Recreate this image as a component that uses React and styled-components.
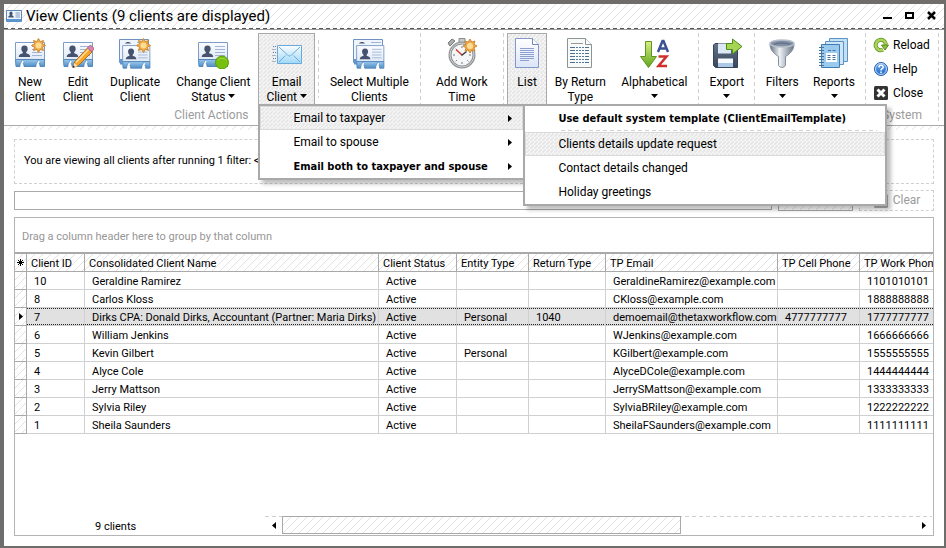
import React from 'react';
import styled, { createGlobalStyle, css } from 'styled-components';

const LINE = '#a9a9a9';
const SOFT = '#d0d0d0';

const wideHatch = css`
  background-image: linear-gradient(135deg, transparent 44%, #e2e2e2 46%, #e2e2e2 54%, transparent 56%);
  background-size: 8px 8px;
`;
const denseHatch = css`
  background-color: #f8f8f8;
  background-image: linear-gradient(135deg, #f8f8f8 20%, #e6e6e6 44%, #e6e6e6 56%, #f8f8f8 80%);
  background-size: 4px 4px;
`;
const dashH = (color) => css`
  background-image: repeating-linear-gradient(90deg, ${color} 0 4px, transparent 4px 7px);
`;
const dashV = css`
  background-image: repeating-linear-gradient(180deg, #d0d0d0 0 4px, transparent 4px 7px);
`;

const GlobalStyle = createGlobalStyle`
  * { box-sizing: border-box; }
  body { margin: 0; background: #fff; overflow: hidden; }
  button, input { font: inherit; color: inherit; margin: 0; }
`;

const Window = styled.div`
  display: flex;
  flex-direction: column;
  height: 100vh;
  min-height: 440px;
  border: solid #6f6d6c;
  border-width: 4px 2px 2px 4px;
  background: #fff;
  color: #000;
  font: 12px/15px Roboto, 'Open Sans', sans-serif;
`;

const TitleBar = styled.header`
  display: flex;
  align-items: center;
  flex: none;
  height: 24px;
  padding: 0 7px 0 2px;
  gap: 4px;
  ${wideHatch}
`;

const TitleRule = styled.div`
  flex: none;
  height: 2px;
  ${dashH('#555')}
  background-size: 100% 1px;
  background-repeat: no-repeat;
  border-bottom: 1px solid #9a9a9a;
`;

const Title = styled.h1`
  flex: 1;
  margin: 0;
  font-size: 15px;
  line-height: 22px;
  font-weight: 400;
`;

const PlainButton = styled.button`
  display: flex;
  align-items: center;
  padding: 0;
  border: 0;
  background: none;
`;

const WindowButtons = styled.div`
  display: flex;
  gap: 10px;
`;

const Ribbon = styled.nav`
  display: flex;
  flex: none;
  height: 96px;
  padding: 3px 2px 0;
  border-bottom: 1px solid ${LINE};
  background: #fff;
`;

const Group = styled.section`
  display: flex;
  flex-direction: column;
`;

const GroupItems = styled.div`
  display: flex;
  height: 72px;
`;

const GroupLabel = styled.div`
  margin-top: 3px;
  text-align: center;
  color: #9b9b9b;
`;

const Separator = styled.div`
  flex: none;
  width: 1px;
  margin: ${(p) => (p.$inner ? '7px 3px' : '0 3px 2px')};
  ${dashV}
`;

const BigButton = styled.button`
  display: flex;
  flex-direction: column;
  align-items: center;
  height: 72px;
  min-width: ${(p) => p.$min || 0}px;
  padding: 3px ${(p) => (p.$tight ? 4 : 7)}px 0;
  border: 1px solid transparent;
  background: none;
  text-align: center;
  white-space: nowrap;
  svg { flex: none; }
  ${(p) => p.$active && css`
    ${denseHatch}
    border-color: ${LINE};
  `}
`;

const ButtonText = styled.span`
  display: flex;
  flex-direction: column;
  align-items: center;
  margin-top: 6px;
`;

const TextLine = styled.span`
  display: flex;
  align-items: center;
  gap: 3px;
  height: 15px;
  svg { margin-bottom: 3px; }
`;

const MenuAnchor = styled.div`
  position: relative;
`;

const Menu = styled.ul`
  position: absolute;
  z-index: 5;
  top: 71px;
  left: 0;
  width: 267px;
  margin: 0;
  padding: 0;
  list-style: none;
  border: 2px solid ${LINE};
  background: #fff;
  box-shadow: 4px 4px 4px rgba(0, 0, 0, 0.25);
`;

const SubMenu = styled(Menu)`
  top: -3px;
  left: 262px;
  width: 364px;
`;

const MenuItem = styled.li`
  position: relative;
  border: 1px solid transparent;
  ${(p) => p.$active && css`
    ${denseHatch}
    border-color: #dadada;
  `}
`;

const MenuButton = styled.button`
  display: flex;
  align-items: center;
  justify-content: space-between;
  width: 100%;
  height: 22px;
  padding: 0 10px 0 32px;
  border: 0;
  background: none;
  white-space: nowrap;
  ${(p) => p.$bold && css`
    font: bold 11px/15px 'DejaVu Sans Condensed', 'DejaVu Sans', sans-serif;
  `}
`;

const MenuRule = styled.li`
  height: 1px;
  margin: 0 8px 1px 36px;
  ${dashH(SOFT)}
`;

const SystemList = styled.div`
  display: flex;
  flex-direction: column;
  height: 72px;
  width: 62px;
  margin-left: 4px;
`;

const SmallButton = styled.button`
  display: flex;
  align-items: center;
  gap: 4px;
  height: 24px;
  padding: 0;
  border: 0;
  background: none;
`;

const Strip = styled.div`
  flex: none;
  height: 4px;
  ${wideHatch}
`;

const Content = styled.main`
  display: flex;
  flex-direction: column;
  flex: 1;
  min-height: 0;
  gap: 6px;
  padding: 9px 10px 10px;
  font-size: 11px;
`;

const FilterBox = styled.div`
  display: flex;
  align-items: center;
  flex: none;
  height: 45px;
  padding: 0 9px 2px;
  border: 1px dashed ${SOFT};
`;

const SearchRow = styled.div`
  display: flex;
  align-items: center;
  flex: none;
  gap: 6px;
  height: 21px;
`;

const SearchInput = styled.input`
  flex: 1;
  min-width: 0;
  height: 19px;
  padding: 0 4px;
  border: 1px solid ${LINE};
  border-radius: 0;
  outline: 0;
`;

const SearchButton = styled.button`
  display: flex;
  align-items: center;
  justify-content: center;
  gap: 4px;
  width: 75px;
  height: 21px;
  padding: 0;
  border: 1px solid ${LINE};
  background-color: #fff;
  ${wideHatch}
  ${(p) => p.$muted && css`
    border: 1px dashed ${SOFT};
    background: #fff;
    color: #9b9b9b;
    font-size: 12px;
  `}
`;

const Grid = styled.section`
  display: flex;
  flex-direction: column;
  flex: 1;
  min-height: 0;
  border: 1px solid #b4b4b4;
`;

const GroupPanel = styled.div`
  display: flex;
  align-items: center;
  flex: none;
  height: 34px;
  padding: 2px 7px 0;
  color: #969696;
`;

const TableArea = styled.div`
  flex: 1;
  min-height: 0;
  overflow: hidden;
  border-top: 2px solid ${LINE};
`;

const Table = styled.table`
  width: 100%;
  min-width: 940px;
  table-layout: fixed;
  border-collapse: separate;
  border-spacing: 0;
`;

const Col = styled.col`
  width: ${(p) => (p.$w ? `${p.$w}px` : 'auto')};
`;

const HeadCell = styled.th`
  height: 18px;
  padding: 2px 0 0 4px;
  border: solid ${LINE};
  border-width: 0 1px 1px 0;
  font-weight: 400;
  line-height: 15px;
  text-align: left;
  white-space: nowrap;
  ${wideHatch}
`;

const MarkCell = styled.th`
  height: 18px;
  padding: 0;
  border: solid ${LINE};
  border-width: 0 1px 1px 0;
  line-height: 0;
  ${wideHatch}
`;

const Cell = styled.td`
  height: 18px;
  padding: 2px 0 0 7px;
  border: solid ${SOFT};
  border-width: 0 1px 1px 0;
  line-height: 15px;
  white-space: nowrap;
`;

const Row = styled.tr`
  ${(p) => p.$selected && css`
    ${Cell} {
      background-color: #e1e1e1;
      background-image:
        repeating-linear-gradient(90deg, #222 0 1px, transparent 1px 2px),
        repeating-linear-gradient(90deg, #222 0 1px, transparent 1px 2px);
      background-size: 100% 1px;
      background-position: top, bottom;
      background-repeat: no-repeat;
    }
  `}
`;

const GridFooter = styled.footer`
  display: flex;
  flex: none;
  height: 19px;
`;

const Total = styled.div`
  width: 250px;
  padding-left: 80px;
  line-height: 22px;
`;

const ScrollBar = styled.div`
  display: flex;
  flex: 1;
  align-items: flex-start;
  margin-right: 1px;
  ${dashH(SOFT)}
  background-size: 100% 1px;
  background-repeat: no-repeat;
`;

const ScrollArrow = styled(PlainButton)`
  justify-content: center;
  width: 17px;
  height: 19px;
`;

const ScrollTrack = styled.div`
  flex: 1;
`;

const ScrollThumb = styled.div`
  width: 63%;
  height: 18px;
  border: 1px solid ${LINE};
  background-color: #fff;
  ${wideHatch}
`;

const Grad = ({ id, a, b }) => (
  <linearGradient id={id} x1="0" y1="0" x2="0" y2="1">
    <stop offset="0" stopColor={a} />
    <stop offset="1" stopColor={b} />
  </linearGradient>
);

const Card = ({ name }) => (
  <g>
    <Grad id={`${name}-p`} a="#fbfdff" b="#dfe9f5" />
    <Grad id={`${name}-b`} a="#9ac7ec" b="#4f90c8" />
    <path d="M1.500 5.500h29v17h-29z" fill={`url(#${name}-p)`} stroke="#7f9cc8" />
    <path d="M1.500 22.500h29v7h-4.500v-1.500a2 2 0 0 0-1.500-2v-2h-1v2a2 2 0 0 0-1.500 2v1.500h-12v-1.500a2 2 0 0 0-1.500-2v-2h-1v2a2 2 0 0 0-1.500 2v1.500h-4z" fill={`url(#${name}-b)`} stroke="#5587ba" />
    <path d="M7.500 29.500v-2.500a1.800 1.800 0 0 1 1-1.500v-1.500M23.500 29.500v-2.500a1.800 1.800 0 0 1 1-1.500v-1.500" fill="none" stroke="#fff" strokeWidth="1.500" />
    <path d="M10.500 8.500c2.400 0 3.300 1.600 3.200 3.600-.1 1.500-.8 2.500-1.500 3.200v1c1.800.6 3.800 1 4 3.700h-11.400c.2-2.700 2.200-3.100 4-3.700v-1c-.7-.7-1.400-1.700-1.500-3.200-.1-2 .8-3.600 3.200-3.600z" fill="#46536f" />
    <path d="M18 9.500h10M18 12.500h10M18 15.500h10M18 18.500h10" stroke="#a3b5d6" />
  </g>
);

const Burst = ({ x = 25, y = 9 }) => (
  <g transform={`translate(${x} ${y})`}>
    <path d="M0-7 1.800-3.900 5-5 3.900-1.800 7 0 3.900 1.800 5 5 1.800 3.900 0 7-1.800 3.900-5 5-3.900 1.800-7 0-3.900-1.800-5-5-1.800-3.900z" fill="#f0ab48" stroke="#cc8a35" strokeLinejoin="round" />
    <circle r="3" fill="#ffdc94" />
  </g>
);

const Big = ({ children }) => <svg width="32" height="32" viewBox="0 0 32 32" aria-hidden="true">{children}</svg>;

const BackCard = () => (
  <g>
    <path d="M.5 2.500h29v23h-29z" fill="#eef4fb" stroke="#6f92c3" />
    <path d="M1 22h4v5.500H1z" fill="#5d99cf" />
    <path d="M6 6.500c1-2 5-2 6 0z" fill="#46536f" />
    <path d="M18 5.500h10" stroke="#a3b5d6" />
  </g>
);

const NewIcon = () => <Big><Card name="new" /><Burst x={24.500} y={8.500} /></Big>;
const EditIcon = () => (
  <Big>
    <Card name="edit" />
    <path d="m11 30.500 1.500-5.500 13-14 4.500 4-13.500 13.500z" fill="#f5a42c" stroke="#b66b16" />
    <path d="m14 25.500 13-13.500" stroke="#ffe09a" strokeWidth="1.500" />
    <path d="m25.500 11 2-2.300c1.400-1 4.900 2 4 3.800l-1.700 2.300z" fill="#d987b2" stroke="#a9628b" />
    <path d="m11 30.500 1.300-4.500 3.500 3z" fill="#f7dfb8" /><path d="m10.500 31 .8-2.500 1.700 1.500z" fill="#333" />
  </Big>
);
const StackIcon = ({ name, burst }) => (
  <Big><BackCard /><g transform="translate(2.200 3.400) scale(.94)"><Card name={name} /></g>{burst && <Burst x={24.500} y={8.500} />}</Big>
);
const StatusIcon = () => <Big><Card name="status" /><circle cx="25" cy="25.500" r="6.500" fill="#77c00e" stroke="#5b9a0a" /><path d="M20.500 23.500a5 4 0 0 1 9 0" stroke="#9cda45" fill="none" /></Big>;
const MailIcon = () => (
  <Big>
    <Grad id="mail" a="#fafdff" b="#a0d8f8" />
    <path d="M6.500 8.500h24v18h-24z" fill="url(#mail)" stroke="#6aa9dc" />
    <path d="m8 10 8.500 8c1.300 1.200 2.700 1.200 4 0l8.500-8M8 25l6.500-6.500M29 25l-6.500-6.500" fill="none" stroke="#6aabdc" />
    <path d="M2 9.500h3M1.500 12.500h3.500M2 15.500h3M1.500 18.500h3.500M2 21.500h3M1.500 24.500h3.500" stroke="#5f7aa3" strokeDasharray="1 1" />
  </Big>
);
const ClockIcon = () => (
  <Big>
    <path d="m2 6 4-4 3 2-5 5z" fill="#a9adb0" stroke="#777" />
    <path d="M13 1.500h6v4h-6z" fill="#c8cacc" stroke="#8a8a8a" />
    <circle cx="16" cy="18" r="12" fill="#f5f6f7" stroke="#8e9194" strokeWidth="3" />
    <circle cx="16" cy="18" r="12" fill="none" stroke="#cfd1d3" />
    <path d="M16 9v2M16 25v2M7 18h2M23 18h2M9.700 11.700l1.200 1.200M21.300 23.300l1.200 1.200M9.700 24.300l1.200-1.200" stroke="#777" />
    <path d="m16 18-6-5.500" stroke="#d83a2c" strokeWidth="1.500" /><path d="m15.500 18.500 5-4" stroke="#333" strokeWidth="1.500" />
    <Burst x={24} y={9} />
  </Big>
);
const ListIcon = () => (
  <Big>
    <Grad id="list" a="#fff" b="#dbe5f8" />
    <path d="M4.500 1.500h17l6 6v23h-23z" fill="url(#list)" stroke="#8499c9" />
    <path d="M21.500 1.500v6h6" fill="#fff" stroke="#6f88bf" />
    <path d="M9 11.500h14M9 13.500h14M9 15.500h14M9 17.500h14M9 19.500h14M9 21.500h14M9 23.500h9" stroke="#8d9fd0" />
  </Big>
);
const TypeIcon = () => (
  <Big>
    <path d="M3.500 1.500h18l6 6v23h-24z" fill="#f9fafa" stroke="#8d9496" />
    <path d="M21.500 1.500v6h6" fill="#fff" stroke="#8d9496" />
    <path d="M7 6.500h12" stroke="#999" />
    <path d="M6 10.500h5M6 13.500h5M6 16.500h5M6 19.500h5M6 22.500h5M6 25.500h5M21 10.500h4M21 13.500h4M21 16.500h4M21 19.500h4M21 22.500h4M21 25.500h4" stroke="#4b6f93" />
    <path d="M12 10.500h8M12 13.500h8M12 16.500h8M12 19.500h8M12 22.500h8M12 25.500h8" stroke="#557a9c" strokeDasharray="2 1" />
  </Big>
);
const SortIcon = () => (
  <Big>
    <Grad id="sort" a="#d8ef84" b="#5fa51c" />
    <path d="M7.500 4.500h6v15h5l-8 11-8-11h5z" fill="url(#sort)" stroke="#5e9422" strokeLinejoin="round" />
    <path d="m20 15 4.500-11h1L30 15M22 11.500h6" fill="none" stroke="#3d5195" strokeWidth="2.500" />
    <path d="M20.500 19.500h8l-8 9.500h8.500" fill="none" stroke="#d0302d" strokeWidth="2.500" />
  </Big>
);
const ExportIcon = () => (
  <Big>
    <Grad id="disk" a="#63738a" b="#39455b" />
    <path d="M4 6.500h21l1.500 1.500v22.500h-22l-2-2v-20.500z" fill="url(#disk)" stroke="#38445a" />
    <path d="M7 6.500h13v10h-13z" fill="#dce8f4" />
    <path d="M7 21.500h15v8.500h-15z" fill="#f7fafc" /><path d="M7 26h15v4h-15z" fill="#a9c9e6" />
    <path d="M15.500 6.500h6v-4.500l9.500 7.500-9.500 7.500v-4.500h-6z" fill="#a5d552" stroke="#4e8c1b" strokeLinejoin="round" />
  </Big>
);
const FilterIcon = () => (
  <Big>
    <linearGradient id="funnel"><stop stopColor="#65707f" /><stop offset=".4" stopColor="#eef2f5" /><stop offset="1" stopColor="#637182" /></linearGradient>
    <path d="M4 7c0 6 4 10 8.500 12.500v9c1.500 2.500 5.500 2.500 7 0v-9c4.500-2.500 8.500-6.500 8.500-12.500z" fill="url(#funnel)" stroke="#8690a0" />
    <ellipse cx="16" cy="6.500" rx="12" ry="3.500" fill="#8190a4" stroke="#b7c0cb" strokeWidth="1.500" />
    <path d="M8 7.500c4-2 12-2 16 0" fill="none" stroke="#566579" />
  </Big>
);
const ReportsIcon = () => (
  <Big>
    <path d="M11.500 1.500h18v23h-18z" fill="#c3e0f5" stroke="#5c93c4" />
    <path d="M7.500 4.500h18v23h-18z" fill="#cfe6f8" stroke="#5c93c4" />
    <path d="M3.500 7.500h18v23h-18z" fill="#9bcaef" stroke="#417caf" />
    <path d="M8 16h11v9h-11z" fill="#fff" />
    <path d="M10 13.500h3M14.500 13.500h3M9.500 18.500h3M14.500 18.500h3M9.500 20.500h3M14.500 20.500h3M9.500 22.500h3M14.500 22.500h3" stroke="#4b7399" />
    <path d="M1 10.500h5M1 13.500h5M1 16.500h5M1 19.500h5M1 22.500h5M1 25.500h5M1 28.500h5" stroke="#47749c" />
  </Big>
);

const TitleIcon = () => (
  <svg width="16" height="14" viewBox="0 0 16 14" aria-hidden="true">
    <path d="M.5 1.500h15v11h-15z" fill="#eef5fc" stroke="#5d86b9" />
    <path d="M1 10h14v2.500H1z" fill="#5b98d0" />
    <path d="M5 2.500c2 0 2 3 .8 3.800 1 .4 2 .7 2 2.200h-5.600c0-1.500 1-1.800 2-2.200C3 5.500 3 2.500 5 2.500z" fill="#46536f" />
    <path d="M9.500 4h4.500M9.500 6h4.500M9.500 8h4.500" stroke="#8298c0" />
  </svg>
);
const ReloadIcon = () => (
  <svg width="16" height="16" viewBox="0 0 16 16" aria-hidden="true">
    <path d="M10 12.800a5.200 5.200 0 1 1 3-5.300" fill="none" stroke="#5f9120" strokeWidth="4" />
    <path d="M10 12.800a5.200 5.200 0 1 1 3-5.300" fill="none" stroke="#a9d457" strokeWidth="2.500" />
    <path d="M8.500 8h7l-3.500 5z" fill="#8fc13b" stroke="#55861c" strokeLinejoin="round" />
  </svg>
);
const HelpIcon = () => (
  <svg width="16" height="16" viewBox="0 0 16 16" aria-hidden="true">
    <Grad id="help" a="#71aef0" b="#1b62c4" />
    <circle cx="8" cy="8" r="6.500" fill="url(#help)" stroke="#245eab" />
    <circle cx="8" cy="8" r="5.500" fill="none" stroke="#b9d8fa" />
    <path d="M6 6.500c0-3 4.200-2.800 4.200-.3 0 1.500-2.200 1.500-2.200 3.200M8 10.500v1.800" fill="none" stroke="#fff" strokeWidth="1.500" />
  </svg>
);
const CloseIcon = ({ color = '#333' }) => (
  <svg width="16" height="16" viewBox="0 0 16 16" aria-hidden="true">
    <rect x="1" y="1" width="14" height="14" rx="1.500" fill={color} />
    <path d="m4.500 4.500 7 7M11.500 4.500l-7 7" stroke="#fff" strokeWidth="3" />
  </svg>
);
const DownArrow = () => <svg width="7" height="4" viewBox="0 0 7 4" aria-hidden="true"><path d="M0 0h7L3.500 4z" /></svg>;
const RightArrow = () => <svg width="4" height="7" viewBox="0 0 4 7" aria-hidden="true"><path d="M0 0v7l4-3.500z" /></svg>;
const LeftArrow = () => <svg width="4" height="7" viewBox="0 0 4 7" aria-hidden="true"><path d="M4 0v7L0 3.500z" /></svg>;
const StarMark = () => (
  <svg width="7" height="7" viewBox="0 0 7 7" aria-hidden="true"><path d="M3.500 0v7M0 3.500h7M1 1l5 5M6 1 1 6" stroke="#000" /></svg>
);

function RibbonButton({ icon, lines, arrow, active, min, tight }) {
  return (
    <BigButton type="button" $active={active} $min={min} $tight={tight}>
      {icon}
      <ButtonText>
        {lines.map((line, i) => (
          <TextLine key={line}>
            {line}
            {arrow && i === 1 && <DownArrow />}
          </TextLine>
        ))}
        {arrow && lines.length === 1 && <TextLine><DownArrow /></TextLine>}
      </ButtonText>
    </BigButton>
  );
}

const columns = [
  ['Client ID', 58], ['Consolidated Client Name', 294], ['Client Status', 78], ['Entity Type', 72],
  ['Return Type', 77], ['TP Email', 172], ['TP Cell Phone', 82], ['TP Work Phone', 0],
];

const clients = [
  ['10', 'Geraldine Ramirez', 'Active', '', '', 'GeraldineRamirez@example.com', '', '1101010101'],
  ['8', 'Carlos Kloss', 'Active', '', '', 'CKloss@example.com', '', '1888888888'],
  ['7', 'Dirks CPA: Donald Dirks, Accountant (Partner: Maria Dirks)', 'Active', 'Personal', '1040', 'demoemail@thetaxworkflow.com', '4777777777', '1777777777'],
  ['6', 'William Jenkins', 'Active', '', '', 'WJenkins@example.com', '', '1666666666'],
  ['5', 'Kevin Gilbert', 'Active', 'Personal', '', 'KGilbert@example.com', '', '1555555555'],
  ['4', 'Alyce Cole', 'Active', '', '', 'AlyceDCole@example.com', '', '1444444444'],
  ['3', 'Jerry Mattson', 'Active', '', '', 'JerrySMattson@example.com', '', '1333333333'],
  ['2', 'Sylvia Riley', 'Active', '', '', 'SylviaBRiley@example.com', '', '1222222222'],
  ['1', 'Sheila Saunders', 'Active', '', '', 'SheilaFSaunders@example.com', '', '1111111111'],
];

function EmailMenu() {
  return (
    <Menu>
      <MenuItem $active>
        <MenuButton type="button">Email to taxpayer<RightArrow /></MenuButton>
        <SubMenu>
          <MenuItem><MenuButton type="button" $bold>Use default system template (ClientEmailTemplate)</MenuButton></MenuItem>
          <MenuRule />
          <MenuItem $active><MenuButton type="button">Clients details update request</MenuButton></MenuItem>
          <MenuItem><MenuButton type="button">Contact details changed</MenuButton></MenuItem>
          <MenuItem><MenuButton type="button">Holiday greetings</MenuButton></MenuItem>
        </SubMenu>
      </MenuItem>
      <MenuItem><MenuButton type="button">Email to spouse<RightArrow /></MenuButton></MenuItem>
      <MenuItem><MenuButton type="button" $bold>Email both to taxpayer and spouse<RightArrow /></MenuButton></MenuItem>
    </Menu>
  );
}

export default function App() {
  return (
    <>
      <GlobalStyle />
      <Window>
        <TitleBar>
          <TitleIcon />
          <Title>View Clients (9 clients are displayed)</Title>
          <WindowButtons>
            <PlainButton type="button" aria-label="Minimize">
              <svg width="12" height="12" viewBox="0 0 12 12"><path d="M2 8h9" stroke="#000" strokeWidth="2" /></svg>
            </PlainButton>
            <PlainButton type="button" aria-label="Maximize">
              <svg width="12" height="12" viewBox="0 0 12 12"><path d="M3 3h7v5H3z" fill="none" stroke="#000" strokeWidth="2" /></svg>
            </PlainButton>
            <PlainButton type="button" aria-label="Close window">
              <svg width="12" height="12" viewBox="0 0 12 12"><path d="m3 2 7 7M10 2 3 9" stroke="#000" strokeWidth="2.500" /></svg>
            </PlainButton>
          </WindowButtons>
        </TitleBar>
        <TitleRule />
        <Ribbon>
          <Group>
            <GroupItems>
              <RibbonButton icon={<NewIcon />} lines={['New', 'Client']} />
              <RibbonButton icon={<EditIcon />} lines={['Edit', 'Client']} />
              <RibbonButton icon={<StackIcon name="dup" burst />} lines={['Duplicate', 'Client']} />
              <RibbonButton icon={<StatusIcon />} lines={['Change Client', 'Status']} arrow />
              <MenuAnchor>
                <RibbonButton icon={<MailIcon />} lines={['Email', 'Client']} arrow active />
                <EmailMenu />
              </MenuAnchor>
              <Separator $inner />
              <RibbonButton icon={<StackIcon name="multi" />} lines={['Select Multiple', 'Clients']} />
            </GroupItems>
            <GroupLabel>Client Actions</GroupLabel>
          </Group>
          <Separator />
          <RibbonButton icon={<ClockIcon />} lines={['Add Work', 'Time']} min={76} />
          <Separator />
          <RibbonButton icon={<ListIcon />} lines={['List']} active tight />
          <RibbonButton icon={<TypeIcon />} lines={['By Return', 'Type']} min={66} />
          <RibbonButton icon={<SortIcon />} lines={['Alphabetical']} arrow min={82} />
          <Separator />
          <RibbonButton icon={<ExportIcon />} lines={['Export']} arrow />
          <Separator />
          <RibbonButton icon={<FilterIcon />} lines={['Filters']} arrow />
          <RibbonButton icon={<ReportsIcon />} lines={['Reports']} arrow />
          <Separator />
          <Group>
            <SystemList>
              <SmallButton type="button"><ReloadIcon />Reload</SmallButton>
              <SmallButton type="button"><HelpIcon />Help</SmallButton>
              <SmallButton type="button"><CloseIcon />Close</SmallButton>
            </SystemList>
            <GroupLabel>System</GroupLabel>
          </Group>
          <Separator />
        </Ribbon>
        <Strip />
        <Content>
          <FilterBox>You are viewing all clients after running 1 filter: &lt;</FilterBox>
          <SearchRow>
            <SearchInput type="text" aria-label="Search clients" />
            <SearchButton type="button" aria-label="Search" />
            <SearchButton type="button" $muted><CloseIcon color="#b0b0b0" />Clear</SearchButton>
          </SearchRow>
          <Grid>
            <GroupPanel>Drag a column header here to group by that column</GroupPanel>
            <TableArea>
              <Table>
                <colgroup>
                  <Col $w={12} />
                  {columns.map(([name, w]) => <Col key={name} $w={w} />)}
                </colgroup>
                <thead>
                  <tr>
                    <MarkCell scope="col"><StarMark /></MarkCell>
                    {columns.map(([name]) => <HeadCell key={name} scope="col">{name}</HeadCell>)}
                  </tr>
                </thead>
                <tbody>
                  {clients.map((client) => (
                    <Row key={client[0]} $selected={client[0] === '7'}>
                      <MarkCell scope="row">{client[0] === '7' && <RightArrow />}</MarkCell>
                      {client.map((value, i) => <Cell key={columns[i][0]}>{value}</Cell>)}
                    </Row>
                  ))}
                </tbody>
              </Table>
            </TableArea>
            <GridFooter>
              <Total>9 clients</Total>
              <ScrollBar>
                <ScrollArrow type="button" aria-label="Scroll left"><LeftArrow /></ScrollArrow>
                <ScrollTrack><ScrollThumb /></ScrollTrack>
                <ScrollArrow type="button" aria-label="Scroll right"><RightArrow /></ScrollArrow>
              </ScrollBar>
            </GridFooter>
          </Grid>
        </Content>
      </Window>
    </>
  );
}
